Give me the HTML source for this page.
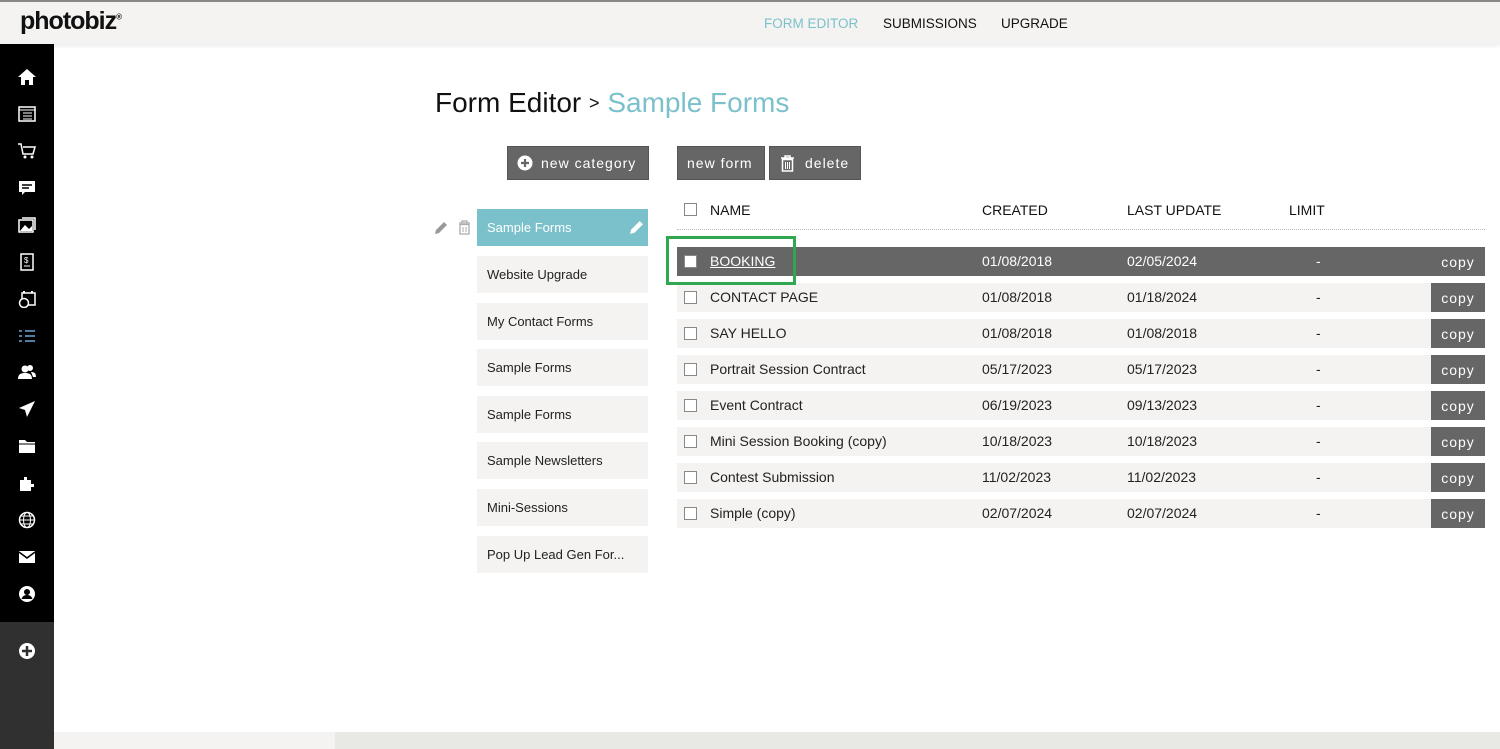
<!DOCTYPE html>
<html><head><meta charset="utf-8"><style>
*{margin:0;padding:0;box-sizing:border-box}
body{width:1500px;height:749px;position:relative;overflow:hidden;background:#fff;font-family:"Liberation Sans",sans-serif;color:#222}
.top{position:absolute;left:0;top:0;width:1500px;height:44px;background:#f4f3f1;border-top:2px solid #888;box-shadow:0 2px 4px rgba(0,0,0,.08)}
.logo{position:absolute;left:20px;top:5px;font-size:25px;font-weight:bold;letter-spacing:-1px;color:#111}
.logo sup{font-size:8px}
.nav{position:absolute;top:14px;font-size:13.5px;color:#111}
.side{position:absolute;left:0;top:44px;width:54px;height:705px;background:#000}
.side2{position:absolute;left:0;top:622px;width:54px;height:127px;background:#303030}
.ic{position:absolute;left:18px;width:18px;height:18px}
.bot1{position:absolute;left:54px;top:732px;width:281px;height:17px;background:#f4f3f1}
.bot2{position:absolute;left:335px;top:732px;width:1165px;height:17px;background:#e8e8e4}
h1{position:absolute;left:435px;top:87px;font-weight:normal;font-size:28px;color:#111}
h1 span{color:#7bc1cb}
.btn{position:absolute;top:146px;height:34px;background:#666;border:1px solid #555;color:#fff;font-size:14px;letter-spacing:1px;line-height:32px}
.cat{position:absolute;left:477px;width:171px;height:37px;background:#f4f3f1;font-size:13px;line-height:37px;padding-left:10px;color:#222}
.hdr{position:absolute;top:202px;font-size:14px;color:#111}
.row{position:absolute;left:677px;width:808px;height:29px;background:#f4f3f1;font-size:14px;line-height:29px}
.row div{position:absolute;top:0}
.cb{position:absolute;width:13px;height:13px;border:1px solid #888;background:#fff;top:8px;left:7px}
.cp{position:absolute;right:0;top:0;width:54px;height:29px;background:#666;color:#fff;letter-spacing:1px;text-align:center;line-height:31px}
</style></head><body>
<div class="top"><div class="logo">photobiz<sup>®</sup></div>
<div class="nav" style="left:764px;color:#7bc1cb">FORM EDITOR</div>
<div class="nav" style="left:883px">SUBMISSIONS</div>
<div class="nav" style="left:1001px">UPGRADE</div></div>
<div class="side"></div><div class="side2"></div>
<svg class="ic" style="top:68px" viewBox="0 0 18 18"><path d="M9 1L0 9h3v8h4v-5h4v5h4V9h3z" fill="#fff"/></svg>
<svg class="ic" style="top:105px" viewBox="0 0 18 18"><rect x="1" y="2" width="16" height="14" fill="none" stroke="#fff" stroke-width="1.5"/><path d="M1 5h16M5 8h9M5 11h9M5 14h9" stroke="#fff"/></svg>
<svg class="ic" style="top:142px" viewBox="0 0 18 18"><path d="M0 2h3l2 10h10l2-7H5" fill="none" stroke="#fff" stroke-width="1.5"/><circle cx="7" cy="15" r="1.5" fill="#fff"/><circle cx="14" cy="15" r="1.5" fill="#fff"/></svg>
<svg class="ic" style="top:179px" viewBox="0 0 18 18"><path d="M1 2h16v11H7l-3 3v-3H1z" fill="#fff"/><path d="M4 6h10M4 9h7" stroke="#000" stroke-width="1.5"/></svg>
<svg class="ic" style="top:216px" viewBox="0 0 18 18"><rect x="1" y="4" width="14" height="12" fill="none" stroke="#fff" stroke-width="1.5"/><path d="M4 2h13v12" fill="none" stroke="#fff" stroke-width="1.5"/><path d="M2 15l5-6 4 4 3-3v5z" fill="#fff"/></svg>
<svg class="ic" style="top:253px" viewBox="0 0 18 18"><rect x="3" y="1" width="12" height="16" fill="none" stroke="#fff" stroke-width="1.5"/><text x="6" y="10" font-size="8" fill="#fff">$</text><path d="M6 13h6" stroke="#fff"/></svg>
<svg class="ic" style="top:290px" viewBox="0 0 18 18"><rect x="4" y="3" width="13" height="12" fill="none" stroke="#fff" stroke-width="1.5"/><circle cx="6" cy="13" r="4.5" fill="#000" stroke="#fff" stroke-width="1.5"/><path d="M6 3V1M14 3V1" stroke="#fff" stroke-width="2"/></svg>
<svg class="ic" style="top:327px" viewBox="0 0 18 18"><path d="M1 4h3M7 4h10M1 9h3M7 9h10M1 14h3M7 14h10" stroke="#6fa6d9" stroke-width="1.5"/></svg>
<svg class="ic" style="top:363px" viewBox="0 0 18 18"><circle cx="7" cy="6" r="3.5" fill="#fff"/><circle cx="12" cy="5" r="3" fill="#fff"/><path d="M0 16c0-5 3-6 7-6s7 1 7 6zM13 9c3 0 5 1 5 5h-3" fill="#fff"/></svg>
<svg class="ic" style="top:400px" viewBox="0 0 18 18"><path d="M17 1L1 8l6 2 2 7z" fill="#fff"/></svg>
<svg class="ic" style="top:437px" viewBox="0 0 18 18"><path d="M1 3h6l2 2h8v11H1z" fill="#fff"/><path d="M1 7h16" stroke="#000"/></svg>
<svg class="ic" style="top:474px" viewBox="0 0 18 18"><path d="M2 6h4V3h3v3h4v4h3v3h-3v4H2z" fill="#fff"/></svg>
<svg class="ic" style="top:511px" viewBox="0 0 18 18"><circle cx="9" cy="9" r="7.5" fill="none" stroke="#fff" stroke-width="1.5"/><ellipse cx="9" cy="9" rx="3.5" ry="7.5" fill="none" stroke="#fff"/><path d="M1.5 9h15M3 5h12M3 13h12" stroke="#fff"/></svg>
<svg class="ic" style="top:548px" viewBox="0 0 18 18"><path d="M1 3h16v12H1z" fill="#fff"/><path d="M1 4l8 6 8-6" fill="none" stroke="#000" stroke-width="1.5"/></svg>
<svg class="ic" style="top:585px" viewBox="0 0 18 18"><circle cx="9" cy="9" r="8" fill="#fff"/><circle cx="9" cy="7" r="3" fill="#000"/><path d="M3.5 14c1-3 3-4 5.5-4s4.5 1 5.5 4" fill="#000"/></svg>
<svg class="ic" style="top:642px" viewBox="0 0 18 18"><circle cx="9" cy="9" r="8" fill="#fff"/><path d="M9 4v10M4 9h10" stroke="#303030" stroke-width="2.5"/></svg>
<div class="bot1"></div><div class="bot2"></div>
<h1>Form Editor <small style="font-size:18px;position:relative;top:-3px">&gt;</small> <span>Sample Forms</span></h1>
<div class="btn" style="left:507px;width:142px;padding-left:33px"><svg style="position:absolute;left:9px;top:8px" width="16" height="16" viewBox="0 0 16 16"><circle cx="8" cy="8" r="7.5" fill="#fff"/><path d="M8 4v8M4 8h8" stroke="#666" stroke-width="2.2"/></svg>new category</div>
<div class="btn" style="left:677px;width:88px;padding-left:9px">new form</div>
<div class="btn" style="left:769px;width:92px;padding-left:35px"><svg style="position:absolute;left:10px;top:8px" width="15" height="17" viewBox="0 0 15 17"><path d="M1 3h13M5 3V1h5v2M2.5 4.5h10V16h-10z" fill="none" stroke="#fff" stroke-width="1.5"/><path d="M5.5 7v7M7.5 7v7M9.5 7v7" stroke="#fff"/></svg>delete</div>
<svg style="position:absolute;left:434px;top:221px" width="14" height="14" viewBox="0 0 14 14"><path d="M1 13l1-4 8-8 3 3-8 8z" fill="#999"/></svg>
<svg style="position:absolute;left:458px;top:220px" width="13" height="15" viewBox="0 0 13 15"><path d="M1 3h11M4 3V1h5v2M2 4.5h9V14H2z" fill="none" stroke="#aaa" stroke-width="1.3"/><path d="M5 7v5M8 7v5" stroke="#aaa"/></svg>
<div class="cat" style="top:209px;background:#7bc1cb;color:#fff">Sample Forms<svg style="position:absolute;right:4px;top:11px" width="15" height="15" viewBox="0 0 14 14"><path d="M1 13l1-4 8-8 3 3-8 8z" fill="#fff"/></svg></div>
<div class="cat" style="top:256px">Website Upgrade</div>
<div class="cat" style="top:303px">My Contact Forms</div>
<div class="cat" style="top:349px">Sample Forms</div>
<div class="cat" style="top:396px">Sample Forms</div>
<div class="cat" style="top:442px">Sample Newsletters</div>
<div class="cat" style="top:489px">Mini-Sessions</div>
<div class="cat" style="top:536px">Pop Up Lead Gen For...</div>
<div class="cb" style="left:684px;top:203px;position:absolute"></div>
<div class="hdr" style="left:710px">NAME</div>
<div class="hdr" style="left:982px">CREATED</div>
<div class="hdr" style="left:1127px">LAST UPDATE</div>
<div class="hdr" style="left:1289px">LIMIT</div>
<div style="position:absolute;left:677px;top:229px;width:808px;border-top:1px dotted #bbb"></div>
<div class="row" style="top:247px;background:#666;color:#fff"><span class="cb"></span><div style="left:33px;text-decoration:underline">BOOKING</div><div style="left:305px">01/08/2018</div><div style="left:450px">02/05/2024</div><div style="left:639px">-</div><div class="cp" style="background:none">copy</div></div>
<div class="row" style="top:283px"><span class="cb"></span><div style="left:33px">CONTACT PAGE</div><div style="left:305px">01/08/2018</div><div style="left:450px">01/18/2024</div><div style="left:639px">-</div><div class="cp">copy</div></div>
<div class="row" style="top:319px"><span class="cb"></span><div style="left:33px">SAY HELLO</div><div style="left:305px">01/08/2018</div><div style="left:450px">01/08/2018</div><div style="left:639px">-</div><div class="cp">copy</div></div>
<div class="row" style="top:355px"><span class="cb"></span><div style="left:33px">Portrait Session Contract</div><div style="left:305px">05/17/2023</div><div style="left:450px">05/17/2023</div><div style="left:639px">-</div><div class="cp">copy</div></div>
<div class="row" style="top:391px"><span class="cb"></span><div style="left:33px">Event Contract</div><div style="left:305px">06/19/2023</div><div style="left:450px">09/13/2023</div><div style="left:639px">-</div><div class="cp">copy</div></div>
<div class="row" style="top:427px"><span class="cb"></span><div style="left:33px">Mini Session Booking (copy)</div><div style="left:305px">10/18/2023</div><div style="left:450px">10/18/2023</div><div style="left:639px">-</div><div class="cp">copy</div></div>
<div class="row" style="top:463px"><span class="cb"></span><div style="left:33px">Contest Submission</div><div style="left:305px">11/02/2023</div><div style="left:450px">11/02/2023</div><div style="left:639px">-</div><div class="cp">copy</div></div>
<div class="row" style="top:499px"><span class="cb"></span><div style="left:33px">Simple (copy)</div><div style="left:305px">02/07/2024</div><div style="left:450px">02/07/2024</div><div style="left:639px">-</div><div class="cp">copy</div></div>
<div style="position:absolute;left:666px;top:236px;width:130px;height:49px;border:3px solid #2fa84f"></div>
</body></html>
